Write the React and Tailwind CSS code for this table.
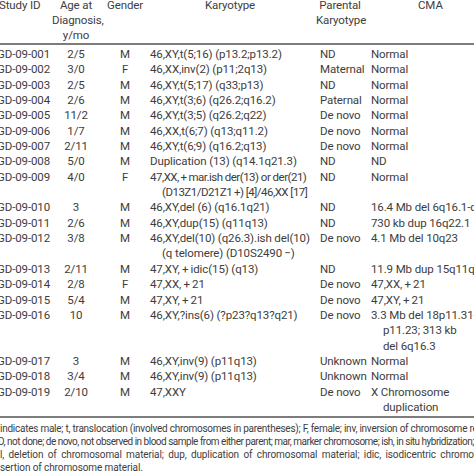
const ROWS = [
    { id: 'GD-09-001', age: '2/5', sex: 'M', kar: ['46,XY,t(5;16) (p13.2;p13.2)'], par: 'ND', cma: ['Normal'] },
    { id: 'GD-09-002', age: '3/0', sex: 'F', kar: ['46,XX,inv(2) (p11;2q13)'], par: 'Maternal', cma: ['Normal'] },
    { id: 'GD-09-003', age: '2/5', sex: 'M', kar: ['46,XY,t(5;17) (q33;p13)'], par: 'ND', cma: ['Normal'] },
    { id: 'GD-09-004', age: '2/6', sex: 'M', kar: ['46,XY,t(3;6) (q26.2;q16.2)'], par: 'Paternal', cma: ['Normal'] },
    { id: 'GD-09-005', age: '11/2', sex: 'M', kar: ['46,XY,t(3;5) (q26.2;q22)'], par: 'De novo', cma: ['Normal'] },
    { id: 'GD-09-006', age: '1/7', sex: 'M', kar: ['46,XX,t(6;7) (q13;q11.2)'], par: 'De novo', cma: ['Normal'] },
    { id: 'GD-09-007', age: '2/11', sex: 'M', kar: ['46,XY,t(6;9) (q16.2;q13)'], par: 'De novo', cma: ['Normal'] },
    { id: 'GD-09-008', age: '5/0', sex: 'M', kar: ['Duplication (13) (q14.1q21.3)'], par: 'ND', cma: ['ND'] },
    { id: 'GD-09-009', age: '4/0', sex: 'F', kar: ['47,XX,\u2009+\u2009mar.ish der(13) or der(21)', '(D13Z1/D21Z1\u2009+) [4]/46,XX [17]'], par: 'ND', cma: ['Normal'], tight: true },
    { id: 'GD-09-010', age: '3', sex: 'M', kar: ['46,XY,del (6) (q16.1q21)'], par: 'ND', cma: ['16.4 Mb del 6q16.1-q21'] },
    { id: 'GD-09-011', age: '2/6', sex: 'M', kar: ['46,XY,dup(15) (q11q13)'], par: 'ND', cma: ['730 kb dup 16q22.1'] },
    { id: 'GD-09-012', age: '3/8', sex: 'M', kar: ['46,XY,del(10) (q26.3).ish del(10)', '(q telomere) (D10S2490\u2009\u2212)'], par: 'De novo', cma: ['4.1 Mb del 10q23'] },
    { id: 'GD-09-013', age: '2/11', sex: 'M', kar: ['47,XY,\u2009+\u2009idic(15) (q13)'], par: 'ND', cma: ['11.9 Mb dup 15q11q13'] },
    { id: 'GD-09-014', age: '2/8', sex: 'F', kar: ['47,XX,\u2009+\u200921'], par: 'De novo', cma: ['47,XX,\u2009+\u200921'] },
    { id: 'GD-09-015', age: '5/4', sex: 'M', kar: ['47,XY,\u2009+\u200921'], par: 'De novo', cma: ['47,XY,\u2009+\u200921'] },
    { id: 'GD-09-016', age: '10', sex: 'M', kar: ['46,XY,?ins(6) (?p23?q13?q21)'], par: 'De novo', cma: ['3.3 Mb del 18p11.31-', 'p11.23; 313 kb', 'del 6q16.3'] },
    { id: 'GD-09-017', age: '3', sex: 'M', kar: ['46,XY,inv(9) (p11q13)'], par: 'Unknown', cma: ['Normal'] },
    { id: 'GD-09-018', age: '3/4', sex: 'M', kar: ['46,XY,inv(9) (p11q13)'], par: 'Unknown', cma: ['Normal'] },
    { id: 'GD-09-019', age: '2/10', sex: 'M', kar: ['47,XXY'], par: 'De novo', cma: ['X Chromosome', 'duplication'] },
];

// wrapped cell: first line flush, the rest hang by 12px
function Lines({ lines }) {
    return lines.map((l, i) => (
        <div key={i} className={i > 0 ? 'pl-[12px]' : ''}>{l}</div>
    ));
}

export default function App() {
    return (
        <div className="w-[474px] h-[474px] overflow-hidden bg-white text-[#3d3d3d] font-['Roboto','Liberation_Sans',sans-serif]">
            <div className="w-[520px] -ml-[4px] text-[11.5px] tracking-[-0.01em] whitespace-nowrap">
                {/* header */}
                <div className="grid grid-cols-[56px_48px_50px_166px_54px_146px] leading-[15px] -mt-[2px] border-b-2 border-[#7d7d7d]">
                    <div className="pl-[3px]">Study ID</div>
                    <div className="text-center">
                        <div>Age at</div>
                        <div>Diagnosis,</div>
                        <div>y/mo</div>
                    </div>
                    <div className="text-center">Gender</div>
                    <div className="text-center pr-[6px]">Karyotype</div>
                    <div className="text-center pr-[6px]">
                        <div>Parental</div>
                        <div>Karyotype</div>
                    </div>
                    <div className="pl-[48px]">CMA</div>
                </div>

                {/* body */}
                <div className="pt-[2px] pb-[1px] leading-[15.35px] border-b-2 border-[#7d7d7d]">
                    {ROWS.map(r => (
                        <div key={r.id} className="grid grid-cols-[56px_48px_50px_166px_54px_146px]">
                            <div className="pl-[1px]">{r.id}</div>
                            <div className="text-center">{r.age}</div>
                            <div className="text-center">{r.sex}</div>
                            <div className={r.tight ? 'tracking-[-0.045em]' : ''}><Lines lines={r.kar} /></div>
                            <div className="pl-[4px]">{r.par}</div>
                            <div className="pl-[1px]"><Lines lines={r.cma} /></div>
                        </div>
                    ))}
                </div>

                {/* footnote */}
                <div className="pt-[4px] text-[10px] leading-[13px] w-[500px] tracking-[-0.01em]">
                    <div className="pl-[4px] tracking-[-0.025em]">indicates male; t, translocation (involved chromosomes in parentheses); F, female; inv, inversion of chromosome region;</div>
                    <div className="pl-[2px] tracking-[-0.05em]">D, not done; de novo, not observed in blood sample from either parent; mar, marker chromosome; ish, in situ hybridization;</div>
                    <div className="pl-[4px] [word-spacing:2px]">l, deletion of chromosomal material; dup, duplication of chromosomal material; idic, isodicentric chromosome; ins, in-</div>
                    <div className="pl-[4px]">sertion of chromosome material.</div>
                </div>
            </div>
        </div>
    );
}
